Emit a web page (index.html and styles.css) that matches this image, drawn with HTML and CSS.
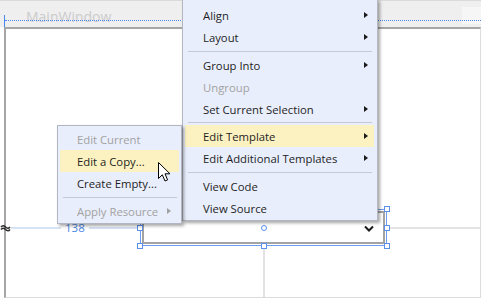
FILE: index.html
```html
<!DOCTYPE html>
<html lang="en">

<head>
    <meta charset="UTF-8">
    <meta name="viewport" content="width=device-width, initial-scale=1.0">
    <title>MainWindow designer</title>
    <link rel="stylesheet" href="styles.css">
</head>

<body>
    <div class="screen">
        <div class="titlebar">
            <span class="title">MainWindow</span>
            <span class="caption-btn"></span>
        </div>
        <div class="frame"></div>

        <!-- design guides -->
        <div class="guide-h"></div>
        <div class="guide-v"></div>
        <div class="grid-h"></div>
        <div class="grid-v"></div>
        <div class="margin-line"></div>
        <span class="margin-label">138</span>
        <svg class="link-icon" width="11" height="8" viewBox="0 0 11 8">
            <path d="M1 3 Q3 0.5 5.5 3 T10 3" fill="none" stroke="#2b2b2b" stroke-width="1.6" />
            <path d="M1 5.5 Q3 3 5.5 5.5 T10 5.5" fill="none" stroke="#2b2b2b" stroke-width="1.6" />
        </svg>

        <!-- selected combobox -->
        <div class="combo">
            <svg class="chevron" width="10" height="7" viewBox="0 0 10 7">
                <path d="M1 1.5 L5 5.5 L9 1.5" fill="none" stroke="#1a1a1a" stroke-width="2" />
            </svg>
        </div>
        <div class="selection"></div>
        <span class="handle h-tr"></span>
        <span class="handle h-mr"></span>
        <span class="handle h-br"></span>
        <span class="handle h-bm"></span>
        <span class="handle h-bl"></span>
        <span class="handle h-ml"></span>
        <span class="center-dot"></span>

        <!-- context menu -->
        <ul class="menu main-menu">
            <li class="item">Align<i class="arrow"></i></li>
            <li class="item">Layout<i class="arrow"></i></li>
            <li class="sep"></li>
            <li class="item">Group Into<i class="arrow"></i></li>
            <li class="item disabled">Ungroup</li>
            <li class="item">Set Current Selection<i class="arrow"></i></li>
            <li class="sep tight"></li>
            <li class="item active">Edit Template<i class="arrow"></i></li>
            <li class="item">Edit Additional Templates<i class="arrow"></i></li>
            <li class="sep"></li>
            <li class="item">View Code</li>
            <li class="item">View Source</li>
        </ul>

        <ul class="menu sub-menu">
            <li class="item disabled">Edit Current</li>
            <li class="item active">Edit a Copy...</li>
            <li class="item">Create Empty...</li>
            <li class="sep"></li>
            <li class="item disabled">Apply Resource<i class="arrow"></i></li>
        </ul>

        <svg class="cursor" width="14" height="21" viewBox="0 0 14 21">
            <path d="M0.5 0.5 L0.5 16.5 L4.3 12.8 L7 19 L9.6 17.9 L7 11.8 L12 11.8 Z" fill="#fff" stroke="#000"
                stroke-width="1" stroke-linejoin="round" />
        </svg>
    </div>
</body>

</html>
```

FILE: styles.css
```css
* {
    margin: 0;
    padding: 0;
    box-sizing: border-box;
}

body {
    background-color: #fff;
    font-family: "Open Sans", "Noto Sans", sans-serif;
    font-size: 11.3px;
    color: #1e1e1e;
}

.screen {
    position: relative;
    width: 481px;
    height: 298px;
    overflow: hidden;
    background: #fff;
}

.titlebar {
    display: flex;
    justify-content: space-between;
    align-items: flex-start;
    height: 27px;
    background: #efefef;
    border-top: 1px solid #dadada;
}

.title {
    padding: 7px 0 0 26px;
    font-size: 14px;
    line-height: 17px;
    color: #cbcbcb;
}

.caption-btn {
    width: 19px;
    height: 17px;
    margin-top: 6px;
    background: #f6f6f6;
}

.frame {
    height: 271px;
    margin-left: 4px;
    border-left: 2px solid #a6a6a6;
    border-top: 2px solid #a6a6a6;
    border-right: 1px solid #dcdcdc;
    border-bottom: 1px solid #dcdcdc;
}

/* guides */
.guide-h {
    position: absolute;
    top: 20px;
    left: 5px;
    right: 0;
    border-top: 1px dotted #4a88f0;
}

.guide-v {
    position: absolute;
    top: 15px;
    left: 4px;
    width: 1px;
    height: 12px;
    background: #4a88f0;
}

.grid-h {
    position: absolute;
    top: 227px;
    left: 389px;
    right: 1px;
    height: 2px;
    background: #e3e3e3;
}

.grid-v {
    position: absolute;
    top: 248px;
    left: 263px;
    width: 2px;
    bottom: 1px;
    background: #e3e3e3;
}

.margin-line {
    position: absolute;
    top: 227px;
    left: 11px;
    width: 129px;
    height: 2px;
    background: #d6e3f6;
}

.margin-label {
    position: absolute;
    top: 220px;
    left: 61px;
    padding: 0 4px;
    background: #fff;
    font-size: 11.5px;
    line-height: 16px;
    color: #4c87e6;
}

.link-icon {
    position: absolute;
    top: 224px;
    left: 0;
}

/* combobox + adorners */
.combo {
    position: absolute;
    top: 211px;
    left: 142px;
    width: 243px;
    height: 33px;
    border: 2px solid #a3a3a3;
    background: #fff;
}

.chevron {
    position: absolute;
    right: 9px;
    top: 12px;
}

.selection {
    position: absolute;
    top: 209px;
    left: 140px;
    width: 247px;
    height: 37px;
    border: 1px solid #6d9cf0;
}

.handle {
    position: absolute;
    width: 6px;
    height: 6px;
    border: 1px solid #5b8fea;
    background: #fff;
}

.h-tr { left: 384px; top: 206px; }
.h-mr { left: 384px; top: 225px; }
.h-br { left: 384px; top: 243px; }
.h-bm { left: 261px; top: 243px; }
.h-bl { left: 137px; top: 243px; }
.h-ml { left: 137px; top: 225px; }

.center-dot {
    position: absolute;
    left: 261px;
    top: 225px;
    width: 6px;
    height: 6px;
    border: 1px solid #5b8fea;
    border-radius: 50%;
    background: #fff;
}

/* menus */
.menu {
    position: absolute;
    list-style: none;
    background: #e9eefc;
    border: 1px solid #b3b6c0;
    box-shadow: 2px 2px 3px rgba(0, 0, 0, 0.35);
}

.main-menu {
    top: -1px;
    left: 182px;
    width: 196px;
    padding: 4px 3px 1px 2px;
}

.sub-menu {
    top: 125px;
    left: 57px;
    width: 125px;
    padding: 2px 2px 1px 2px;
}

.item {
    display: flex;
    justify-content: space-between;
    align-items: center;
    height: 22px;
    padding: 0 6px 0 18px;
    white-space: nowrap;
}

.sub-menu .item {
    padding: 0 8px 0 17px;
}

.item.active {
    background: #fcf2c1;
}

.item.disabled {
    color: #a2a2a2;
}

.arrow {
    width: 0;
    height: 0;
    border-top: 3.5px solid transparent;
    border-bottom: 3.5px solid transparent;
    border-left: 4px solid #1a1a1a;
}

.disabled .arrow {
    border-left-color: #a2a2a2;
}

.sep {
    height: 1px;
    margin: 3px 2px 2px 3px;
    background: #c6c9d3;
}

.sep.tight {
    margin: 2px 2px 2px 3px;
}

.cursor {
    position: absolute;
    top: 162px;
    left: 158px;
}
```
